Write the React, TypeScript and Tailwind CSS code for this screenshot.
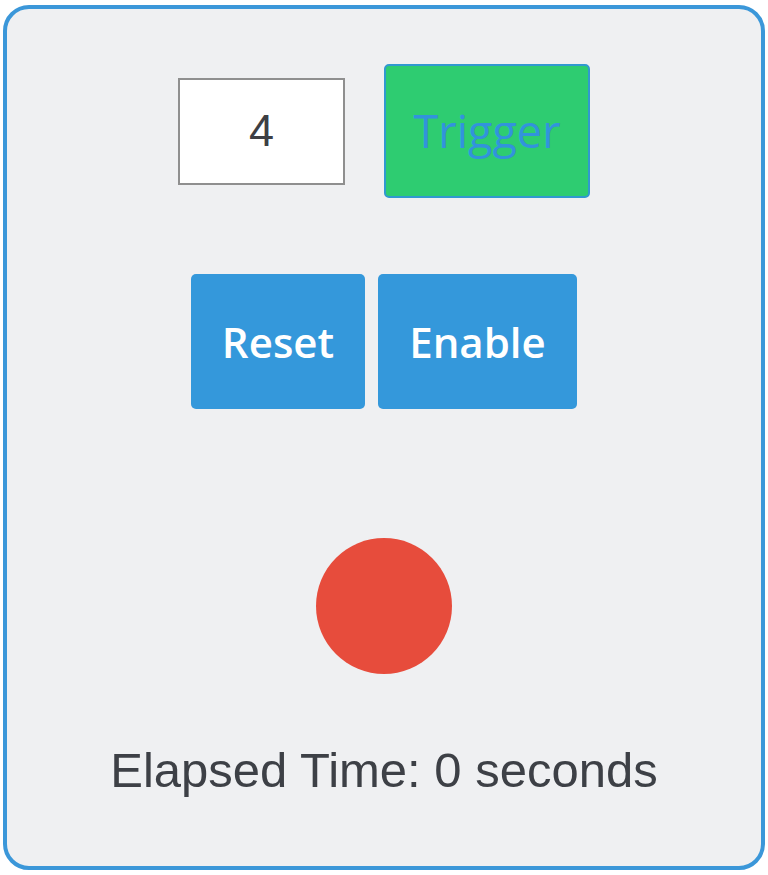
import { useState } from "react";

export default function App() {
  const [count, setCount] = useState("4");
  const [elapsed] = useState(0);

  return (
    <div className="min-h-screen bg-white pt-[5px] pl-[3px]">
      <div className="w-[762px] h-[865px] rounded-[26px] border-4 border-[#3b97d9] bg-[#eff0f2] flex flex-col items-center pt-[55px]">
        {/* trigger row */}
        <div className="flex items-center gap-[39px]">
          <input
            value={count}
            onChange={(e) => setCount(e.target.value)}
            className="w-[167px] h-[107px] border-2 border-[#8f8f8f] bg-white text-center text-[45px] text-[#3d3f44] outline-none"
            style={{ fontFamily: '"Liberation Sans", Arial, sans-serif' }}
          />
          <button
            className="w-[206px] h-[134px] rounded-[5px] border-2 border-[#3199d0] bg-[#2ecc71] text-[45px] text-[#3293dc]"
            style={{ fontFamily: '"Open Sans", sans-serif' }}
          >
            Trigger
          </button>
        </div>

        {/* controls */}
        <div className="flex gap-[13px] mt-[76px]">
          <button
            className="w-[174px] h-[135px] rounded-[5px] bg-[#3498db] text-[42px] font-semibold text-white"
            style={{ fontFamily: '"Open Sans", sans-serif' }}
          >
            Reset
          </button>
          <button
            className="w-[199px] h-[135px] rounded-[5px] bg-[#3498db] text-[42px] font-semibold text-white"
            style={{ fontFamily: '"Open Sans", sans-serif' }}
          >
            Enable
          </button>
        </div>

        {/* light */}
        <div className="mt-[129px] w-[136px] h-[136px] rounded-full bg-[#e74c3c]" />

        <p
          className="mt-[72px] text-[49px] leading-[48px] text-[#3d4046]"
          style={{ fontFamily: '"Liberation Sans", Arial, sans-serif' }}
        >
          Elapsed Time: {elapsed} seconds
        </p>
      </div>
    </div>
  );
}
